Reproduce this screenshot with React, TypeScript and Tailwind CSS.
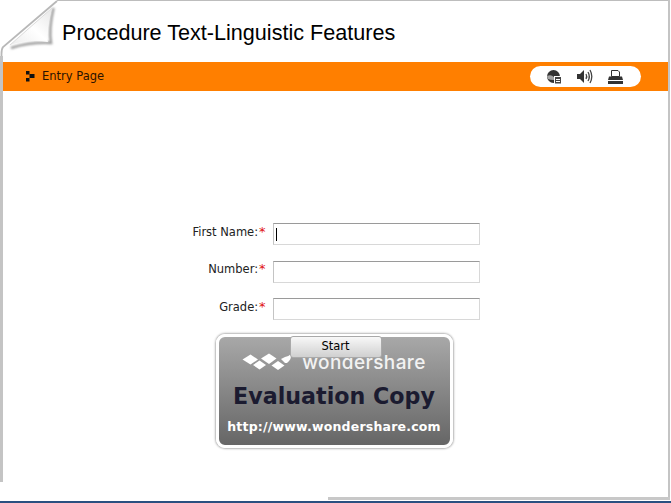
export default function App() {
  return (
    <div className="relative h-[503px] w-[671px] overflow-hidden bg-white font-['DejaVu_Sans',sans-serif]">
      <div className="flex h-[501px] flex-col pl-[3px] pr-[3px]">
        <header className="flex h-[62px] shrink-0 items-start pl-[59px] pt-[20px]">
          <h1 className="font-['Liberation_Sans',sans-serif] text-[21.6px] leading-[26px] text-black">Procedure Text-Linguistic Features</h1>
        </header>
        <nav className="flex h-[29px] shrink-0 items-center justify-between bg-[#ff7f00] pl-[23px] pr-[27px]">
          <div className="flex items-center gap-[7px]">
            <svg width="9" height="11" viewBox="0 0 9 11" fill="#111">
              <rect x="0" y="0" width="3.5" height="3.5" />
              <rect x="3.5" y="3" width="5" height="4" />
              <rect x="0" y="7" width="3.5" height="3.5" />
            </svg>
            <span className="text-[11.5px] leading-none text-[#2a1200]">Entry Page</span>
          </div>
          <div className="flex h-[21px] w-[111px] items-center gap-[15px] rounded-full bg-white pl-[17px]">
            <svg width="15" height="14" viewBox="0 0 15 14">
              <circle cx="6.5" cy="6.5" r="6.5" fill="#333" />
              <path d="M0 6 Q4 4 7 7 L7 10 Q3 10 1 9Z" fill="#fff" opacity="0.55" />
              <rect x="7" y="6" width="8" height="8" fill="#fff" />
              <rect x="8" y="7" width="6" height="6.5" fill="#444" />
              <rect x="9" y="9" width="4" height="1" fill="#fff" />
              <rect x="9" y="11" width="4" height="1" fill="#fff" />
            </svg>
            <svg width="16" height="15" viewBox="0 0 16 15" fill="none">
              <path d="M0 5 H3 L7 1 V14 L3 10 H0Z" fill="#333" />
              <path d="M9 5 Q10.5 7.5 9 10" stroke="#444" strokeWidth="1.3" />
              <path d="M11 3 Q13.6 7.5 11 12" stroke="#444" strokeWidth="1.3" />
              <path d="M13 1 Q16.6 7.5 13 14" stroke="#444" strokeWidth="1.3" />
            </svg>
            <svg width="15" height="14" viewBox="0 0 15 14">
              <path d="M3.5 0.5 H10 L11.5 2 V6.5 H3.5Z" fill="#fff" stroke="#333" />
              <path d="M1 6.5 H14 L15 10 H0Z" fill="#333" />
              <rect x="0" y="11" width="15" height="3" fill="#333" />
            </svg>
          </div>
        </nav>
        <main className="flex flex-1 flex-col items-center pt-[132px]">
          <form className="ml-[1px] grid grid-cols-[auto_207px] items-center gap-x-[7px] gap-y-[15.5px] self-center">
            {["First Name:", "Number:", "Grade:"].map((label, i) => (
              <div key={label} className="contents">
                <label className="mb-[5px] justify-self-end text-[11.5px] leading-none text-[#222]">
                  {label}
                  <span className="ml-[1px] text-[13px] leading-none text-[#e01010]">*</span>
                </label>
                <div className="flex h-[22px] items-center border border-[#d8d8d8] border-t-[#9a9a9a] border-l-[#c4c4c4] bg-white">
                  {i === 0 && <span className="ml-[2px] h-[13px] w-px bg-black" />}
                </div>
              </div>
            ))}
          </form>
          <div className="relative mt-[14px] ml-[-3px] flex h-[114px] w-[237px] flex-col items-center rounded-[9px] border-[3px] border-white bg-gradient-to-b from-[#a8a8a8] to-[#666666] shadow-[0_0_2px_1px_#b5b5b5]">
            <button className="absolute top-[-1px] left-[71px] z-10 h-[22px] w-[92px] rounded-[3px] border border-[#a9a9a9] bg-gradient-to-b from-[#f8f8f8] to-[#d0d0d0] text-[11.5px] leading-none text-black">Start</button>
            <div className="flex h-[37px] items-end gap-[8px] pb-[1px]">
              <svg width="52" height="22" viewBox="0 0 52 22" fill="#fff">
                <path d="M0.5 8.5 L8.5 3.5 L16 8.5 L8.5 13.5Z" />
                <path d="M19 7.5 L27 2.5 L34.5 7.5 L27 13Z" />
                <path d="M11 14 L17.5 9.5 L24 14 L17.5 18.5Z" />
                <path d="M29.5 14.5 L36 10 L42.5 14.5 L36 19Z" />
                <path d="M39 8 L43 6 Q46 6 49 3 Q50 8 45 12 L43 12Z" />
              </svg>
              <span className="font-['Inter',sans-serif] text-[19px] font-medium leading-[20px] tracking-[0.4px] text-[#f2f2f2]">wondershare</span>
            </div>
            <div className="mt-[8px] text-[22.2px] font-bold leading-[28px] text-[#1b1b30]">Evaluation Copy</div>
            <div className="mt-[9px] text-[12.5px] font-bold leading-[16px] tracking-[0.2px] text-white">http://www.wondershare.com</div>
          </div>
        </main>
      </div>
      <svg className="absolute left-0 top-0" width="62" height="58" viewBox="0 0 62 58">
        <defs>
          <linearGradient id="curl" x1="0" y1="1" x2="1" y2="0">
            <stop offset="0" stopColor="#ececec" />
            <stop offset="0.5" stopColor="#ffffff" />
            <stop offset="1" stopColor="#e6e6e6" />
          </linearGradient>
          <linearGradient id="back" x1="0" y1="0" x2="1" y2="1">
            <stop offset="0" stopColor="#ffffff" />
            <stop offset="0.55" stopColor="#ffffff" />
            <stop offset="1" stopColor="#d8d8d8" />
          </linearGradient>
          <filter id="soft" x="-30%" y="-30%" width="160%" height="160%">
            <feGaussianBlur stdDeviation="1.2" />
          </filter>
        </defs>
        <path d="M0 0 H58 V1 L3 48 L0 52Z" fill="#fff" />
        <path d="M57 1 L52 8 L10 45 L3 49Z" fill="url(#back)" />
        <path d="M53.5 8 Q48.5 30 51 43 Q30 42 11 48" stroke="#9c9c9c" strokeWidth="2.5" fill="none" filter="url(#soft)" />
        <path d="M52 8 Q45 36 48 42 Q28 39 10 45Z" fill="url(#curl)" />
        <path d="M57 1 L3 47 Q1.5 49 1.5 54 V58" stroke="#b8b8b8" strokeWidth="1.8" fill="none" />
        <path d="M52 8 L10 45" stroke="#dcdcdc" strokeWidth="1" fill="none" />
      </svg>
      <div className="absolute left-[57px] top-0 h-px w-[613px] bg-[#bdbdbd]" />
      <div className="absolute left-0 top-[56px] h-[426px] w-[3px] bg-[#c4c4c4]" />
      <div className="absolute right-[1px] top-0 h-[500px] w-[2px] bg-[#c4c4c4]" />
      <div className="absolute bottom-[3px] left-[328px] h-[3px] w-[342px] bg-[#c8c8c8]" />
      <div className="absolute bottom-0 left-0 h-[2px] w-full bg-[#2a5080]" />
    </div>
  );
}
